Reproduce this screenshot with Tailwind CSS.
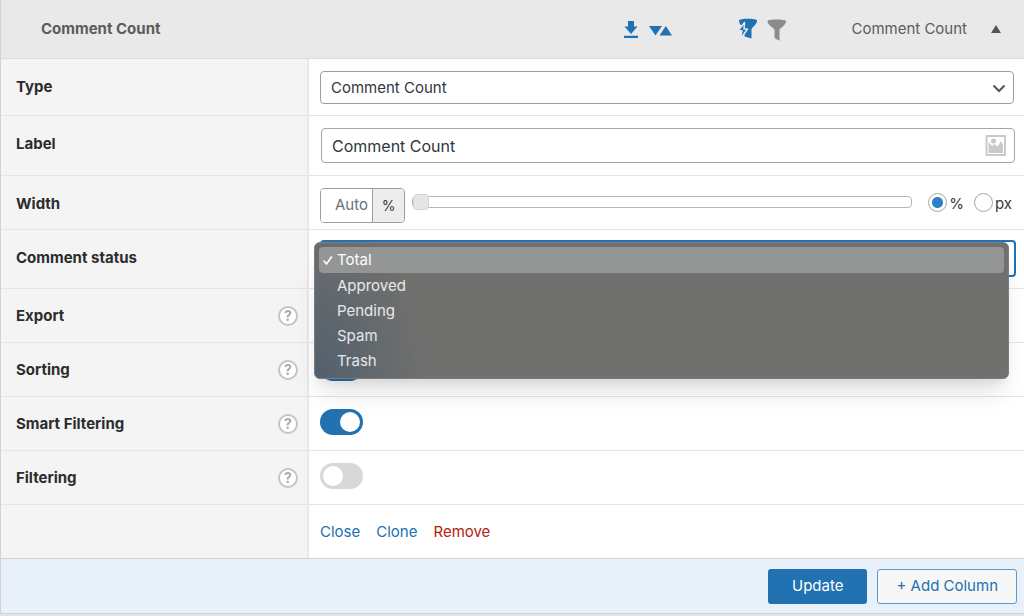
<!DOCTYPE html>
<html lang="en">
<head>
  <meta charset="UTF-8" />
  <meta name="viewport" content="width=device-width, initial-scale=1.0" />
  <title>Comment Count</title>
  <script src="https://cdn.jsdelivr.net/npm/@tailwindcss/browser@4"></script>
</head>
<body class="min-h-screen bg-[#e4e4e4] font-['Inter',sans-serif] text-base text-[#32373c]">
  <main class="border-l border-b border-[#cfd3d8] bg-white">
    <header class="flex h-[59px] items-center border-b border-[#dcdcdc] bg-[#e9e9e9] pl-10 pr-[23px] text-[#5c5c5c]">
      <h1 class="flex-1 text-[15px] font-bold">Comment Count</h1>
      <div class="flex w-[228px] items-center">
        <svg class="h-[17px] w-4" viewBox="0 0 16 17" fill="#2271b1"><path d="M5 0h6v5.500h3.500L8 13 1.500 5.500H5zM1 14.800h14V17H1z"/></svg>
        <svg class="ml-2.5 mt-1 h-3 w-6" viewBox="0 0 24 12" fill="#2271b1"><path d="M0 1h13L6.500 10.500zM10.500 10.500H23L16.800 1z"/></svg>
        <svg class="ml-16 h-6 w-5" viewBox="0 0 20 24">
          <path fill="#2271b1" d="M2 3.500C2 1.300 20 1.300 20 3.500c0 3.500-3 5-5.500 8.500v9.500L7.500 19.500V12C5 9 2 7 2 3.500z"/>
          <path fill="#2271b1" stroke="#e9e9e9" stroke-width="1.500" stroke-linejoin="round" d="M7.500 5.500L1 13.800h4L3.200 22.500 10.500 12H7z"/>
        </svg>
        <svg class="ml-2.5 h-6 w-5" viewBox="0 0 20 24" fill="#8c8c8c"><path d="M.500 4C.500 2 19 2 19 4c0 3.500-3 5-6.500 8.500v11.200L7.500 21v-8.500C4 9 .500 7.500.500 4z"/></svg>
      </div>
      <span class="text-[15px]">Comment Count</span>
      <button type="button" aria-label="Collapse column" class="ml-6">
        <svg class="h-2 w-2.5" viewBox="0 0 10 8" fill="#555"><path d="M5 0l5 8H0z"/></svg>
      </button>
    </header>

    <form class="text-[15px]">
      <div class="grid min-h-[57px] grid-cols-[308px_1fr] border-b border-[#e5e5e5]">
        <label for="type" class="border-r-2 border-[#e8e8e8] bg-[#f4f4f4] px-[15px] pt-4 leading-6 font-bold text-[#2c2c2c]">Type</label>
        <div class="pt-3 pl-[11px] pr-2.5">
          <div class="relative">
            <select id="type" class="block h-[33px] w-full appearance-none rounded border border-[#9a9fa6] bg-white px-2.5 leading-6">
              <option>Comment Count</option>
            </select>
            <svg class="pointer-events-none absolute right-2 top-3 h-3 w-3.5" viewBox="0 0 14 12" fill="none" stroke="#50575e" stroke-width="2"><path d="M1.500 2.500L7 8l5.500-5.500"/></svg>
          </div>
        </div>
      </div>

      <div class="grid min-h-[60px] grid-cols-[308px_1fr] border-b border-[#e5e5e5]">
        <label for="label" class="border-r-2 border-[#e8e8e8] bg-[#f4f4f4] px-[15px] pt-4 leading-6 font-bold text-[#2c2c2c]">Label</label>
        <div class="py-3 pl-3 pr-[9px]">
          <div class="relative">
            <input id="label" type="text" value="Comment Count" class="block h-[35px] w-full rounded border border-[#a5a5a5] bg-white pl-2.5 pr-10 text-base text-[#32373c]" />
            <button type="button" aria-label="Choose icon" class="absolute right-2 top-[7px]">
              <svg class="h-[22px] w-[22px]" viewBox="0 0 22 22" fill="#c9c9c9"><path fill-rule="evenodd" d="M1.500 0h18.500q1 0 1 1v19q0 1-1 1H1.500q-1 0-1-1V1q0-1 1-1zM2.500 2v17H19V2z"/><path d="M3.500 7l3.500 4 2.500-2 3 2.500L16 6l2 4v8H3.500z"/><circle cx="8.500" cy="6" r="2.600"/></svg>
            </button>
          </div>
        </div>
      </div>

      <div class="grid min-h-[54px] grid-cols-[308px_1fr] border-b border-[#e5e5e5]">
        <label for="width" class="border-r-2 border-[#e8e8e8] bg-[#f4f4f4] px-[15px] pt-4 leading-6 font-bold text-[#2c2c2c]">Width</label>
        <div class="flex items-start pl-[11px] pr-3 pt-3">
          <div class="flex h-[35px] w-[85px] overflow-hidden rounded border border-[#9a9fa6]">
            <input id="width" type="text" placeholder="Auto" class="w-[51px] bg-white pr-1 text-right placeholder:text-[#6c7177]" />
            <span class="flex-1 border-l border-[#9a9fa6] bg-[#ededed] text-center text-sm leading-[34px]">%</span>
          </div>
          <input type="range" value="0" aria-label="Column width" class="ml-[7px] mt-1.5 h-4 min-w-0 flex-1 appearance-none bg-transparent [&::-webkit-slider-runnable-track]:h-3 [&::-webkit-slider-runnable-track]:rounded [&::-webkit-slider-runnable-track]:border [&::-webkit-slider-runnable-track]:border-[#b5b5b5] [&::-webkit-slider-thumb]:-mt-[3px] [&::-webkit-slider-thumb]:h-4 [&::-webkit-slider-thumb]:w-4 [&::-webkit-slider-thumb]:appearance-none [&::-webkit-slider-thumb]:rounded [&::-webkit-slider-thumb]:border [&::-webkit-slider-thumb]:border-[#d3d3d3] [&::-webkit-slider-thumb]:bg-[#e6e6e6]" />
          <label class="ml-4 mt-1 flex items-center gap-0.5 text-[15px] leading-6"><input type="radio" name="unit" checked class="-mt-1 h-[19px] w-[19px] appearance-none rounded-full border border-[#a5a5a5] checked:bg-[radial-gradient(circle,#2f80c6_5px,white_6px)]" />%</label>
          <label class="ml-2.5 mt-1 flex items-center gap-0.5 text-[15px] leading-6"><input type="radio" name="unit" class="-mt-1 h-[19px] w-[19px] appearance-none rounded-full border border-[#a5a5a5] checked:bg-[radial-gradient(circle,#2f80c6_5px,white_6px)]" />px</label>
        </div>
      </div>

      <div class="grid min-h-[59px] grid-cols-[308px_1fr] border-b border-[#e5e5e5]">
        <label for="status" class="border-r-2 border-[#e8e8e8] bg-[#f4f4f4] px-[15px] pt-4 leading-6 font-bold text-[#2c2c2c]">Comment status</label>
        <div class="pl-[11px] pr-2 pt-2.5">
          <div class="relative">
            <select id="status" class="block h-[37px] w-full appearance-none rounded border-2 border-[#2271b1] bg-white px-2.5">
              <option>Total</option>
              <option>Approved</option>
              <option>Pending</option>
              <option>Spam</option>
              <option>Trash</option>
            </select>
            <!-- open list -->
            <ul role="listbox" aria-label="Comment status" class="absolute -left-1.5 right-[7px] top-0.5 z-10 rounded-md border border-[#7c7c7c] bg-[#70706e] bg-[radial-gradient(ellipse_110px_170px_at_bottom_left,#52606d,#70706e)] p-1 pb-[5px] text-white/85 shadow-xl">
              <li role="option" aria-selected="true" class="flex h-[26px] items-center rounded bg-[#949695] pl-1 text-white">
                <svg class="mr-1 h-3 w-2.5" viewBox="0 0 10 12" fill="none" stroke="currentColor" stroke-width="1.600" stroke-linecap="round"><path d="M1 7L3.500 10 8.500 3"/></svg>Total
              </li>
              <li role="option" class="h-[25px] pl-[18px] leading-[25px]">Approved</li>
              <li role="option" class="h-[25px] pl-[18px] leading-[25px]">Pending</li>
              <li role="option" class="h-[25px] pl-[18px] leading-[25px]">Spam</li>
              <li role="option" class="h-[25px] pl-[18px] leading-[25px]">Trash</li>
            </ul>
          </div>
        </div>
      </div>

      <div class="grid min-h-[54px] grid-cols-[308px_1fr] border-b border-[#e5e5e5]">
        <div class="flex items-center justify-between border-r-2 border-[#e8e8e8] bg-[#f4f4f4] pl-[15px] pr-[9px]">
          <label for="export" class="leading-6 font-bold text-[#2c2c2c]">Export</label>
          <button type="button" aria-label="Help: Export" class="h-5 w-5 rounded-full border-2 border-[#c3c4c7] bg-white text-sm leading-4 font-bold text-[#a7aaad]">?</button>
        </div>
        <div class="pl-[11px] pt-3">
          <input id="export" type="checkbox" checked class="block h-[26px] w-[43px] appearance-none rounded-full bg-[#d8d8d8] p-[3px] before:block before:h-5 before:w-5 before:rounded-full before:bg-white checked:bg-[#2271b1] checked:before:ml-[17px]" />
        </div>
      </div>

      <div class="grid min-h-[54px] grid-cols-[308px_1fr] border-b border-[#e5e5e5]">
        <div class="flex items-center justify-between border-r-2 border-[#e8e8e8] bg-[#f4f4f4] pl-[15px] pr-[9px]">
          <label for="sorting" class="leading-6 font-bold text-[#2c2c2c]">Sorting</label>
          <button type="button" aria-label="Help: Sorting" class="h-5 w-5 rounded-full border-2 border-[#c3c4c7] bg-white text-sm leading-4 font-bold text-[#a7aaad]">?</button>
        </div>
        <div class="pl-[11px] pt-3">
          <input id="sorting" type="checkbox" checked class="block h-[26px] w-[43px] appearance-none rounded-full bg-[#d8d8d8] p-[3px] before:block before:h-5 before:w-5 before:rounded-full before:bg-white checked:bg-[#2271b1] checked:before:ml-[17px]" />
        </div>
      </div>

      <div class="grid min-h-[54px] grid-cols-[308px_1fr] border-b border-[#e5e5e5]">
        <div class="flex items-center justify-between border-r-2 border-[#e8e8e8] bg-[#f4f4f4] pl-[15px] pr-[9px]">
          <label for="smart" class="leading-6 font-bold text-[#2c2c2c]">Smart Filtering</label>
          <button type="button" aria-label="Help: Smart Filtering" class="h-5 w-5 rounded-full border-2 border-[#c3c4c7] bg-white text-sm leading-4 font-bold text-[#a7aaad]">?</button>
        </div>
        <div class="pl-[11px] pt-3">
          <input id="smart" type="checkbox" checked class="block h-[26px] w-[43px] appearance-none rounded-full bg-[#d8d8d8] p-[3px] before:block before:h-5 before:w-5 before:rounded-full before:bg-white checked:bg-[#2271b1] checked:before:ml-[17px]" />
        </div>
      </div>

      <div class="grid min-h-[54px] grid-cols-[308px_1fr] border-b border-[#e5e5e5]">
        <div class="flex items-center justify-between border-r-2 border-[#e8e8e8] bg-[#f4f4f4] pl-[15px] pr-[9px]">
          <label for="filtering" class="leading-6 font-bold text-[#2c2c2c]">Filtering</label>
          <button type="button" aria-label="Help: Filtering" class="h-5 w-5 rounded-full border-2 border-[#c3c4c7] bg-white text-sm leading-4 font-bold text-[#a7aaad]">?</button>
        </div>
        <div class="pl-[11px] pt-3">
          <input id="filtering" type="checkbox" class="block h-[26px] w-[43px] appearance-none rounded-full bg-[#d8d8d8] p-[3px] before:block before:h-5 before:w-5 before:rounded-full before:bg-white checked:bg-[#2271b1] checked:before:ml-[17px]" />
        </div>
      </div>

      <div class="grid min-h-[54px] grid-cols-[308px_1fr] border-b border-[#cfd3d8]">
        <div class="border-r-2 border-[#e8e8e8] bg-[#f4f4f4]"></div>
        <div class="flex items-center gap-4 pl-[11px] pt-0.5 text-[#2271b1]">
          <a href="#">Close</a>
          <a href="#">Clone</a>
          <a href="#" class="text-[#b3200d]">Remove</a>
        </div>
      </div>

      <footer class="flex justify-end gap-2.5 bg-[#e8f0fa] px-[7px] pt-2.5 pb-[9px]">
        <button type="submit" class="h-[35px] rounded-[3px] bg-[#2271b1] px-6 text-white">Update</button>
        <button type="button" class="h-[35px] rounded-[3px] border border-[#5b98cb] bg-[#f7f7f7] px-[18px] text-[#2271b1]">+ Add Column</button>
      </footer>
    </form>
  </main>
</body>
</html>
